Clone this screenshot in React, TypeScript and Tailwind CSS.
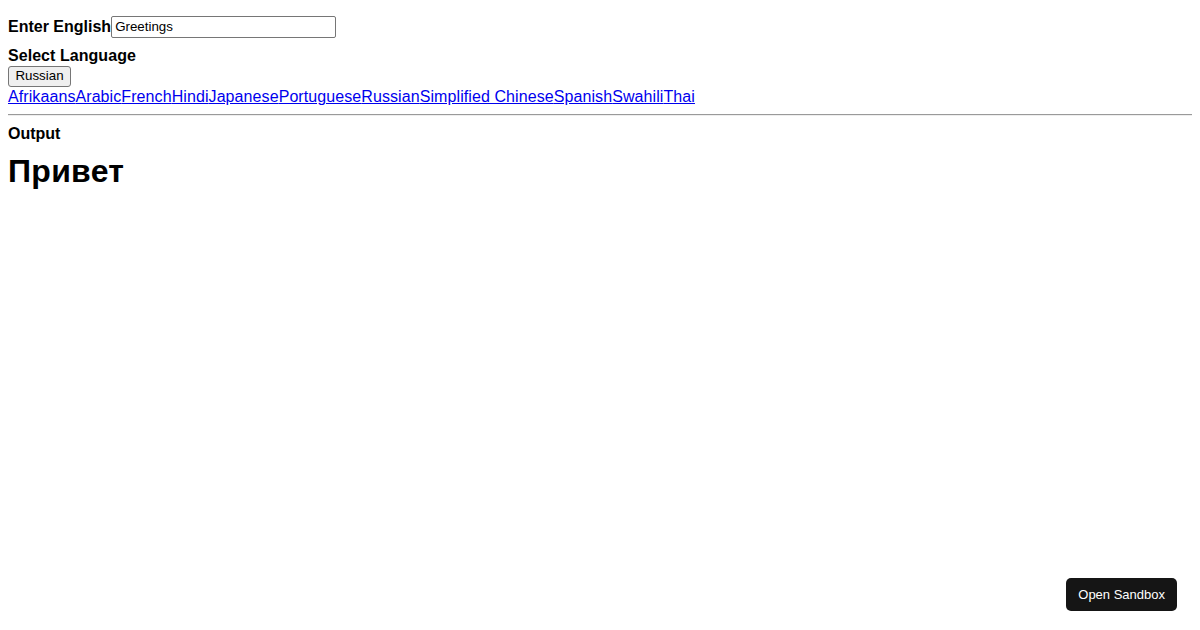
import { useState } from "react";

const languages = [
  "Afrikaans",
  "Arabic",
  "French",
  "Hindi",
  "Japanese",
  "Portuguese",
  "Russian",
  "Simplified Chinese",
  "Spanish",
  "Swahili",
  "Thai",
];

export default function App() {
  const [text, setText] = useState("Greetings");
  const [language, setLanguage] = useState("Russian");

  return (
    <div className="min-h-screen bg-white px-2 pt-4 text-black font-['Liberation_Sans',Arial,sans-serif]">
      <div className="flex h-[22px] items-center">
        <label className="text-[16px] font-bold leading-[18px]">Enter English</label>
        <input
          value={text}
          onChange={(e) => setText(e.target.value)}
          className="box-border h-[22px] w-[225px] rounded-[2px] border border-[#767676] bg-white px-[3px] pb-[1px] text-[13.33px] leading-[16px] outline-none"
        />
      </div>

      <div className="mt-[9px] text-[16px] font-bold leading-[18px] tracking-[0.05px]">Select Language</div>
      <div className="mt-[1px] flex">
        <button className="box-border flex h-[21px] w-[63px] items-center justify-center rounded-[3px] border border-[#767676] bg-[#efefef] pb-[1px] text-[13.33px] leading-[16px]">
          {language}
        </button>
      </div>

      <div className="mt-[1px] flex text-[16px] leading-[18px] tracking-[0.085px]">
        {languages.map((lang) => (
          <a
            key={lang}
            href="#"
            onClick={(e) => {
              e.preventDefault();
              setLanguage(lang);
            }}
            className="text-[#0000ee] underline"
          >
            {lang}
          </a>
        ))}
      </div>

      <hr className="mt-[8px] border-0 border-t border-b border-t-[#9a9a9a] border-b-[#eeeeee]" />

      <div className="mt-[9px] text-[16px] font-bold leading-[18px]">Output</div>
      <h1 className="mt-[10px] text-[32px] font-bold leading-[37px] tracking-[0.3px]">Привет</h1>

      <button className="fixed bottom-[19px] right-[23px] flex h-[33px] items-center rounded-[5px] bg-[#151515] px-[12px] text-[13px] text-white">
        Open Sandbox
      </button>
    </div>
  );
}
